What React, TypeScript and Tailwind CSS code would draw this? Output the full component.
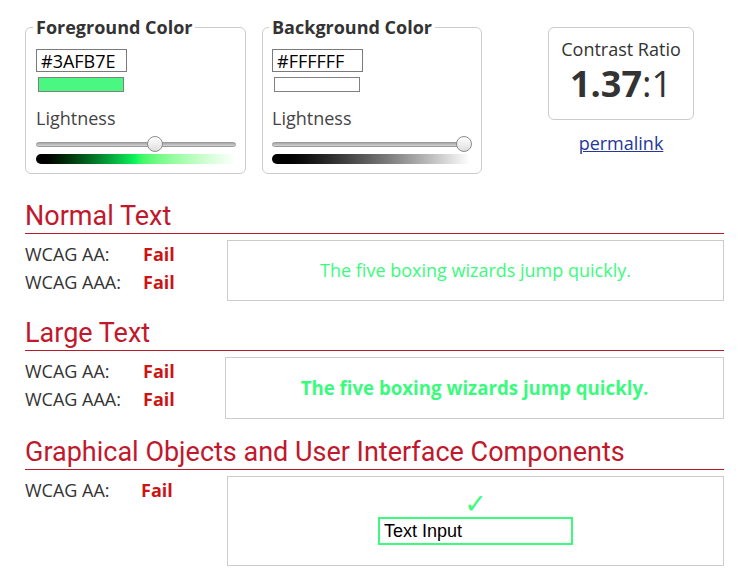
import React from "react";

type SliderProps = {
    thumb: number
    gradient: string
}

const Slider = ({thumb, gradient}: SliderProps) => {
    return (
        <div>
            <div className="relative h-[18px] mt-[4px] flex items-center">
                <div className="w-full h-[5px] rounded-full border border-[#9a9a9a] bg-linear-to-b from-[#a8a8a8] to-[#d4d4d4]"/>
                <div
                    className="absolute top-[1px] w-[16px] h-[16px] rounded-full border border-[#8c8c8c] bg-linear-to-b from-white to-[#dedede]"
                    style={{left: thumb}}
                />
            </div>
            <div className={"mt-[1px] h-[10px] rounded-l-[5px] " + gradient}/>
        </div>
    );
};

type ColorBoxProps = {
    title: string
    hex: string
    swatch: string
    thumb: number
    gradient: string
    className: string
}

const ColorBox = ({title, hex, swatch, thumb, gradient, className}: ColorBoxProps) => {
    return (
        <fieldset className={"border border-[#cccccc] rounded-[6px] pb-[9px] " + className}>
            <legend className="px-[3px] -ml-[3px] font-bold text-[18px] leading-[22px] text-[#333]">{title}</legend>
            <input
                readOnly
                value={hex}
                className="block mt-[11px] w-[91px] h-[23px] border border-[#7a7a7a] px-[4px] text-[18px] leading-none text-black font-['Open_Sans',sans-serif] outline-none"
            />
            <div className={"mt-[5px] ml-[2px] w-[86px] h-[15px] border border-[#808080] " + swatch}/>
            <p className="mt-[14px] text-[18px] leading-[25px] text-[#444]">Lightness</p>
            <Slider thumb={thumb} gradient={gradient}/>
        </fieldset>
    );
};

const Heading = ({children, className}: {children: React.ReactNode, className: string}) => (
    <h2 className={"font-['Roboto',sans-serif] text-[27px] leading-[30px] text-[#c1182d] pb-[2px] border-b border-[#b71c2c] " + className}>
        {children}
    </h2>
);

const Row = ({label}: {label: string}) => (
    <div className="flex text-[18px] leading-[28px]">
        <span className="w-[118px] text-[#333]">{label}</span>
        <span className="font-bold text-[#cc1414]">Fail</span>
    </div>
);

export default function App() {
    return (
        <div className="w-[738px] h-[579px] bg-white pl-[25px] pr-[14px] pt-[16px] font-['Open_Sans',sans-serif] text-[#333] overflow-hidden">
            <div className="flex items-start">
                <ColorBox
                    title="Foreground Color"
                    hex="#3AFB7E"
                    swatch="bg-[#4af780]"
                    thumb={111}
                    gradient="bg-linear-to-r from-black via-[#0cf75c] to-white"
                    className="w-[221px] pl-[10px] pr-[9px]"
                />
                <ColorBox
                    title="Background Color"
                    hex="#FFFFFF"
                    swatch="bg-white"
                    thumb={184}
                    gradient="bg-linear-to-r from-black to-white"
                    className="ml-[16px] w-[220px] pl-[9px] pr-[11px]"
                />
                <div className="ml-[66px] mt-[11px] w-[146px] flex flex-col items-center">
                    <div className="w-full h-[93px] border border-[#cccccc] rounded-[6px] pt-[9px] text-center">
                        <p className="text-[18px] leading-[25px] text-[#333]">Contrast Ratio</p>
                        <p className="text-[36px] leading-[44px] text-[#333]"><b>1.37</b>:1</p>
                    </div>
                    <a href="#" className="mt-[11px] text-[18px] leading-[25px] text-[#24389a] underline">permalink</a>
                </div>
            </div>

            <Heading className="mt-[27px]">Normal Text</Heading>
            <div className="flex mt-[6px]">
                <div className="w-[202px]">
                    <Row label="WCAG AA:"/>
                    <Row label="WCAG AAA:"/>
                </div>
                <div className="flex-1 h-[61px] border border-[#cccccc] flex items-center justify-center">
                    <span className="text-[18px] text-[#3AFB7E]">The five boxing wizards jump quickly.</span>
                </div>
            </div>

            <Heading className="mt-[17px]">Large Text</Heading>
            <div className="flex mt-[6px]">
                <div className="w-[200px]">
                    <Row label="WCAG AA:"/>
                    <Row label="WCAG AAA:"/>
                </div>
                <div className="flex-1 h-[62px] border border-[#cccccc] flex items-center justify-center">
                    <span className="text-[18.67px] font-bold text-[#3AFB7E]">The five boxing wizards jump quickly.</span>
                </div>
            </div>

            <Heading className="mt-[18px]">Graphical Objects and User Interface Components</Heading>
            <div className="flex mt-[6px]">
                <div className="w-[202px]">
                    <div className="flex text-[18px] leading-[28px]">
                        <span className="w-[116px] text-[#333]">WCAG AA:</span>
                        <span className="font-bold text-[#cc1414]">Fail</span>
                    </div>
                </div>
                <div className="flex-1 h-[90px] border border-[#cccccc] flex flex-col items-center">
                    <span className="mt-[13px] h-[27px] text-[27px] leading-[27px] text-[#3AFB7E] font-['DejaVu_Sans',sans-serif]">✓</span>
                    <input
                        readOnly
                        value="Text Input"
                        className="w-[195px] h-[28px] border-2 border-[#3AFB7E] px-[4px] text-[18px] text-black font-['Liberation_Sans',Arial,sans-serif] outline-none"
                    />
                </div>
            </div>
        </div>
    );
}
